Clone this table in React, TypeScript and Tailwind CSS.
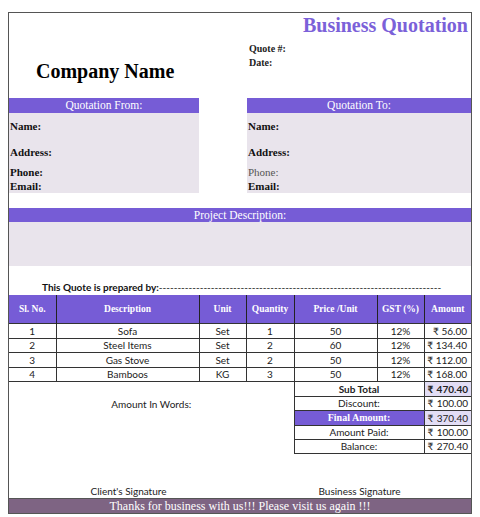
const serif = { fontFamily: '"Liberation Serif", "DejaVu Serif", serif' };

const items = [
  { no: 1, desc: "Sofa", unit: "Set", qty: 1, price: 50, gst: "12%", amount: "₹ 56.00" },
  { no: 2, desc: "Steel Items", unit: "Set", qty: 2, price: 60, gst: "12%", amount: "₹ 134.40" },
  { no: 3, desc: "Gas Stove", unit: "Set", qty: 2, price: 50, gst: "12%", amount: "₹ 112.00" },
  { no: 4, desc: "Bamboos", unit: "KG", qty: 3, price: 50, gst: "12%", amount: "₹ 168.00" },
];

const summary = [
  { label: "Sub Total", value: "470.40", bold: true, highlight: true, h: "h-[15px]" },
  { label: "Discount:", value: "100.00", h: "h-[14px]" },
  { label: "Final Amount:", value: "370.40", purple: true, highlight: true, h: "h-[15px]" },
  { label: "Amount Paid:", value: "100.00", h: "h-[14px]" },
  { label: "Balance:", value: "270.40", h: "h-[14px]" },
];

function PartyBox({ title, muted }: { title: string; muted?: boolean }) {
  return (
    <div className="flex flex-col">
      <div className="h-[15px] bg-[#765cd6] text-white text-center text-[11.5px] leading-[15px]" style={serif}>
        {title}
      </div>
      <div className="h-[80px] bg-[#e9e4ec] px-[1px] text-[11px] leading-[12px] text-[#111]" style={serif}>
        <div className="pt-[7px] font-semibold">Name:</div>
        <div className="mt-[14px] font-semibold">Address:</div>
        <div className={`mt-[8px] ${muted ? "text-[#555]" : "font-semibold"}`}>Phone:</div>
        <div className="mt-[2px] font-semibold">Email:</div>
      </div>
    </div>
  );
}

export default function App() {
  return (
    <div className="w-[480px] h-[517px] bg-white pt-[12px] pl-[8px]" style={{ fontFamily: 'Lato, "Liberation Sans", sans-serif' }}>
      <div className="w-[464px] border border-[#555] flex flex-col">
        {/* Header */}
        <div className="h-[85px] flex">
          <div className="w-[238px] pl-[27px] pt-[47px]">
            <div className="text-[20px] leading-[22px] font-bold text-black" style={serif}>
              Company Name
            </div>
          </div>
          <div className="flex-1 flex flex-col">
            <div className="pt-[1px] pr-[3px] text-right text-[20px] leading-[22px] font-bold text-[#7b61d9]" style={serif}>
              Business Quotation
            </div>
            <div className="mt-[6px] pl-[2px] text-[10px] leading-[14px] font-bold text-[#222]" style={serif}>
              Quote #:
            </div>
            <div className="pl-[2px] text-[10px] leading-[14px] font-bold text-[#222]" style={serif}>
              Date:
            </div>
          </div>
        </div>

        {/* From / To */}
        <div className="grid grid-cols-[190px_48px_1fr]">
          <PartyBox title="Quotation From:" />
          <div />
          <PartyBox title="Quotation To:" muted />
        </div>

        <div className="h-[15px]" />

        {/* Project description */}
        <div className="h-[14px] bg-[#765cd6] text-white text-center text-[11.5px] leading-[14px]" style={serif}>
          Project Description:
        </div>
        <div className="h-[44px] bg-[#e9e4ec]" />

        {/* Prepared by */}
        <div className="h-[29px] flex items-end pb-[2px] pl-[33px] text-[10px] leading-[12px] font-bold text-[#111]">
          <span className="whitespace-nowrap">This Quote is prepared by:</span>
          <span className="whitespace-nowrap font-normal">{"-".repeat(76)}</span>
        </div>

        {/* Items table */}
        <table className="w-full table-fixed border-collapse text-[10px] text-[#222]">
          <colgroup>
            <col className="w-[47px]" />
            <col className="w-[143px]" />
            <col className="w-[47px]" />
            <col className="w-[48px]" />
            <col className="w-[83px]" />
            <col className="w-[47px]" />
            <col className="w-[47px]" />
          </colgroup>
          <thead>
            <tr className="h-[28px] bg-[#765cd6] text-white text-[9.5px] font-bold" style={serif}>
              {["Sl. No.", "Description", "Unit", "Quantity", "Price /Unit", "GST (%)", "Amount"].map((h, i) => (
                <th key={h} className={`p-0 font-bold border-[#222] ${i > 0 ? "border-l" : ""}`}>
                  {h}
                </th>
              ))}
            </tr>
          </thead>
          <tbody>
            {items.map((it, i) => (
              <tr key={it.no} className={i % 2 === 0 ? "h-[15px]" : "h-[14px]"}>
                <td className="p-0 leading-none text-center border border-l-0 border-[#333]">{it.no}</td>
                <td className="p-0 leading-none text-center border border-[#333]">{it.desc}</td>
                <td className="p-0 leading-none text-center border border-[#333]">{it.unit}</td>
                <td className="p-0 leading-none text-center border border-[#333]">{it.qty}</td>
                <td className="p-0 leading-none text-center border border-[#333]">{it.price}</td>
                <td className="p-0 leading-none text-center border border-[#333]">{it.gst}</td>
                <td className="p-0 pr-[4px] leading-none text-right border border-r-0 border-[#333]">{it.amount}</td>
              </tr>
            ))}
            {summary.map((s, i) => (
              <tr key={s.label} className={s.h}>
                {i === 0 && (
                  <td colSpan={4} rowSpan={5} className="p-0 pt-[16px] align-top text-center leading-[12px]">
                    Amount In Words:
                  </td>
                )}
                <td
                  colSpan={2}
                  className={`p-0 leading-none text-center border border-[#333] ${
                    s.purple ? "bg-[#765cd6] text-white font-bold" : ""
                  } ${s.bold ? "font-bold" : ""}`}
                  style={s.purple ? serif : undefined}
                >
                  {s.label}
                </td>
                <td
                  className={`p-0 px-[3px] leading-none border border-r-0 border-[#333] ${
                    s.highlight ? "bg-[#e2ddf5]" : ""
                  } ${s.bold ? "font-bold" : ""}`}
                >
                  <div className="flex justify-between">
                    <span>₹</span>
                    <span>{s.value}</span>
                  </div>
                </td>
              </tr>
            ))}
          </tbody>
        </table>

        {/* Signatures */}
        <div className="h-[44px] flex items-end pb-[1px] text-[10px] leading-[12px] text-[#222]">
          <div className="w-[239px] text-center">Client's Signature</div>
          <div className="flex-1 text-center">Business Signature</div>
        </div>

        {/* Footer */}
        <div className="h-[15px] bg-[#7e6483] text-white text-center text-[12px] leading-[15px] border-t border-[#555]" style={serif}>
          Thanks for business with us!!! Please visit us again !!!
        </div>
      </div>
    </div>
  );
}
